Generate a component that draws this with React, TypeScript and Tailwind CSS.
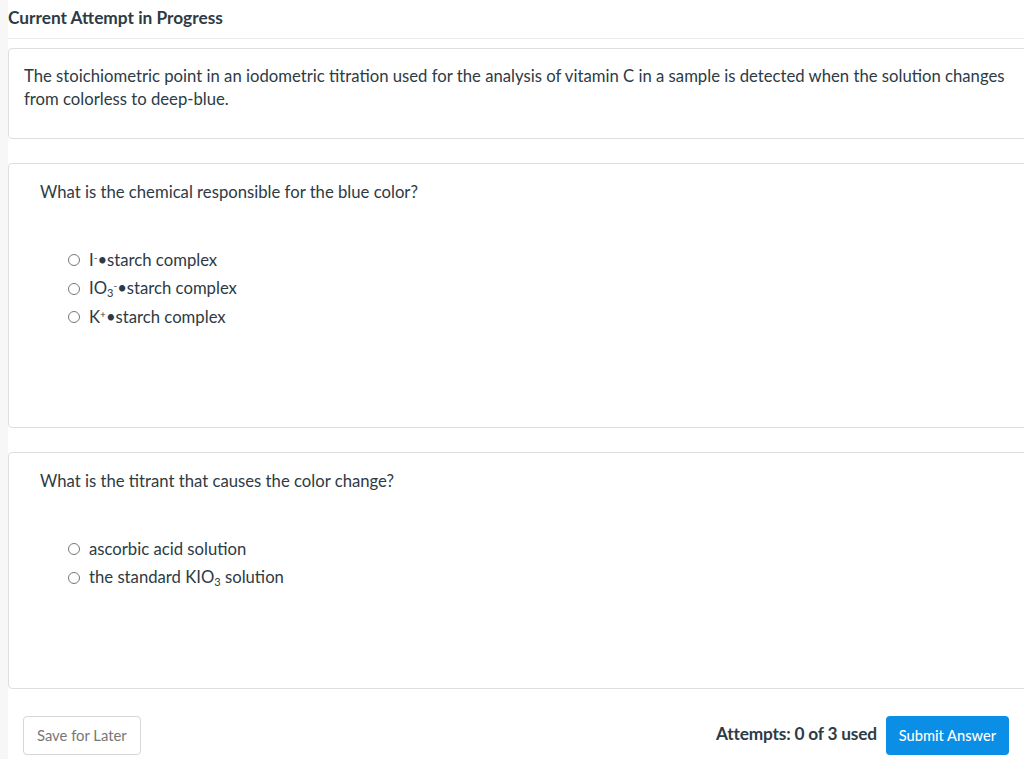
import React from 'react';

function Radio({ children }: { children: React.ReactNode }) {
  return (
    <label className="flex items-center h-[28.5px] text-[16.7px] text-[#2d3b45]">
      <span className="w-[12px] h-[12px] rounded-full border-[1.5px] border-[#777] bg-white mr-[9px] shrink-0" />
      <span>{children}</span>
    </label>
  );
}

export default function App() {
  return (
    <div
      className="w-[1024px] h-[759px] overflow-hidden bg-white flex"
      style={{ fontFamily: 'Lato, "Open Sans", sans-serif' }}
    >
      <div className="w-2 shrink-0 bg-[#f7f7f7]" />
      <div className="w-[1024px] shrink-0 flex flex-col">
        <div className="h-[39px] border-b border-[#ececec] flex items-center">
          <h1 className="text-[17.3px] font-bold text-[#2d3b45] -mt-[3px]">Current Attempt in Progress</h1>
        </div>

        <div className="mt-[9px] w-[1022px] border border-[#dedede] rounded-[4px] px-[15px] pt-[16px] pb-[27px] text-[16.7px] leading-[23px] text-[#2d3b45]">
          The stoichiometric point in an iodometric titration used for the analysis of vitamin C in a sample is detected when the solution changes from colorless to deep-blue.
        </div>

        <div className="mt-[24px] w-[1022px] h-[265px] border border-[#dedede] rounded-[4px] pl-[31px] pt-[17px]">
          <p className="text-[16.7px] leading-[23px] text-[#2d3b45]">What is the chemical responsible for the blue color?</p>
          <div className="mt-[42px] pl-[28px] flex flex-col">
            <Radio>
              I<sup className="text-[10px]">-</sup>•starch complex
            </Radio>
            <Radio>
              IO<sub className="text-[11px]">3</sub>
              <sup className="text-[10px]">-</sup>•starch complex
            </Radio>
            <Radio>
              K<sup className="text-[10px]">+</sup>•starch complex
            </Radio>
          </div>
        </div>

        <div className="mt-[24px] w-[1022px] h-[237px] border border-[#dedede] rounded-[4px] pl-[31px] pt-[17px]">
          <p className="text-[16.7px] leading-[23px] text-[#2d3b45]">What is the titrant that causes the color change?</p>
          <div className="mt-[42px] pl-[28px] flex flex-col">
            <Radio>ascorbic acid solution</Radio>
            <Radio>
              the standard KIO<sub className="text-[11px]">3</sub> solution
            </Radio>
          </div>
        </div>

        <div className="mt-[27px] flex items-center justify-between pl-[15px] pr-[15px] w-[1016px]">
          <button className="h-[39px] px-[13px] border border-[#d6d6d6] rounded-[4px] text-[14.8px] text-[#777] bg-white">
            Save for Later
          </button>
          <div className="flex items-center gap-[9px]">
            <span className="text-[17.3px] font-bold text-[#2d3b45] tracking-[-0.2px] -mt-[3px]">Attempts: 0 of 3 used</span>
            <button className="h-[39px] px-[13px] rounded-[4px] text-[14.6px] text-white bg-[#0b8ee5] font-medium">
              Submit Answer
            </button>
          </div>
        </div>
      </div>
    </div>
  );
}
